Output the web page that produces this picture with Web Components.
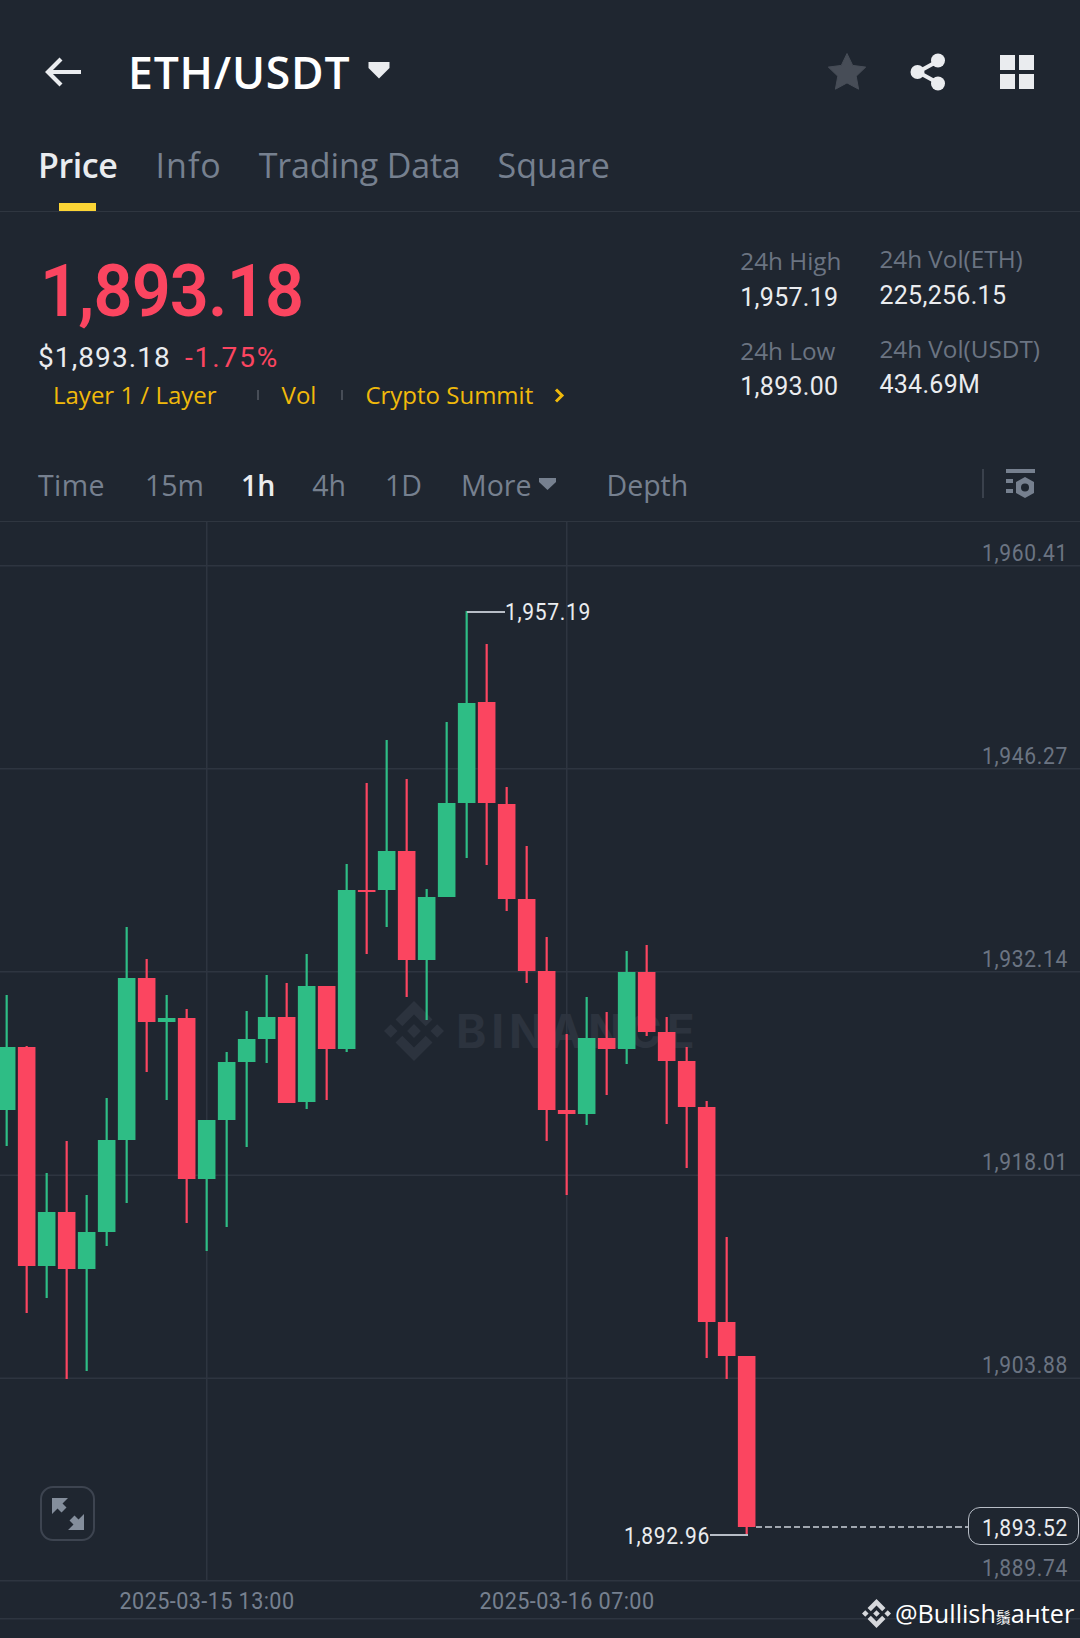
<!DOCTYPE html>
<html><head><meta charset="utf-8"><style>
html,body{margin:0;background:#1f2630}
body{width:1080px;height:1638px;overflow:hidden;font-family:"Open Sans","Noto Sans",sans-serif;color:#eaecef}
</style></head><body>
<market-app></market-app>
<script>
const NUM='Roboto,"Liberation Sans",sans-serif', TXT='"Open Sans","Noto Sans",sans-serif';
class TopBar extends HTMLElement{constructor(){super();this.attachShadow({mode:'open'}).innerHTML=`<style>
:host{display:flex;align-items:center;height:144px;padding-left:45px;box-sizing:border-box;padding-right:46px}
.t{font:600 44.500px/1 ${TXT};color:#fff;margin-left:46px;letter-spacing:.8px}
.c{margin-left:17px;margin-top:-4px}
.r{margin-left:auto;display:flex;align-items:center}
svg{display:block}
</style>
<svg width="37" height="30" viewBox="0 0 37 30"><path d="M36 15H5M16 2L3 15l13 13" fill="none" stroke="#eaecef" stroke-width="4.2"/></svg>
<span class="t">ETH/USDT</span>
<svg class="c" width="24" height="18" viewBox="0 0 24 18"><path d="M1.500 1h21v6L12 17.500 1.500 7z" fill="#eaecef"/></svg>
<div class="r">
<svg width="38" height="38" viewBox="0 0 38 38"><path d="M19 .5l5.700 11.900 13 1.700-9.500 9.100 2.400 13-11.600-6.300L7.400 36.200l2.400-13L.3 14.100l13-1.700z" fill="#474d57" stroke="#474d57" stroke-linejoin="round"/></svg>
<svg style="margin-left:44px" width="36" height="38" viewBox="0 0 36 38"><path d="M28 8L8 19l20 11" fill="none" stroke="#eaecef" stroke-width="4"/><circle cx="28" cy="7.500" r="7" fill="#eaecef"/><circle cx="7.500" cy="19" r="7" fill="#eaecef"/><circle cx="28" cy="30.500" r="7" fill="#eaecef"/></svg>
<svg style="margin-left:54px" width="34" height="34" viewBox="0 0 34 34"><path d="M0 0h15v15H0zM19 0h15v15H19zM0 19h15v15H0zM19 19h15v15H19z" fill="#eaecef"/></svg>
</div>`}}
class TabBar extends HTMLElement{constructor(){super();this.attachShadow({mode:'open'}).innerHTML=`<style>
:host{display:flex;height:68px;box-sizing:border-box;padding-left:38px;border-bottom:1px solid #2f3640;gap:38px;font:500 34px/1 ${TXT};color:#76808f}
span{position:relative;padding-top:4px}
.a{color:#eaecef;font-weight:600;letter-spacing:-.4px}
.a::after{content:"";position:absolute;left:21px;width:37px;height:8px;background:#fcd535;top:59px}
</style><span class="a">Price</span><span style="letter-spacing:1px">Info</span><span style="margin-left:-1px;letter-spacing:-.15px">Trading Data</span><span style="margin-left:-1px">Square</span>`}}
class PriceSummary extends HTMLElement{constructor(){super();this.attachShadow({mode:'open'}).innerHTML=`<style>
:host{display:flex;justify-content:space-between;height:230px;box-sizing:border-box;padding-left:38px}
.big{font:600 72px/1 ${NUM};color:#fb4560;letter-spacing:-.9px;margin:44px 0 0 2px;transform:scaleX(.95);transform-origin:0 0}
.sub{display:flex;gap:14px;font:400 28px/1 ${NUM};margin-top:16px;color:#eaecef}
.sub span{letter-spacing:1.100px}
.sub b{font-weight:400;color:#fb4560;letter-spacing:1.900px}
.tags{display:flex;align-items:center;font:400 24px/1 ${TXT};color:#f0b90b;margin-top:11px;margin-left:15px}
.tags i{display:block;width:2px;height:10px;background:#474d57}
.stats{display:flex;margin-right:40px;padding-top:37px;gap:38px}
.col{display:flex;flex-direction:column;gap:27px}
.col+.col{margin-top:-2px}
.l{font:400 24.300px/1 ${TXT};color:#6b7482;white-space:nowrap}
.v{font:400 25px/1 ${NUM};color:#eaecef;letter-spacing:.3px;margin-top:12px}
.low .l{margin-top:2px}
.low .v{margin-top:10px}
</style>
<div><div class="big">1,893.18</div>
<div class="sub"><span>$1,893.18</span><b>-1.75%</b></div>
<div class="tags"><span>Layer 1 / Layer</span><i style="margin:0 23px 0 40px"></i><span>Vol</span><i style="margin:0 22px 0 25px"></i><span>Crypto Summit</span>
<svg style="margin-left:21px" width="11" height="15" viewBox="0 0 11 15"><path d="M2 1.500l6 6-6 6" fill="none" stroke="#f0b90b" stroke-width="3"/></svg></div></div>
<div class="stats">
<div class="col"><div><div class="l">24h High</div><div class="v">1,957.19</div></div><div class="low"><div class="l">24h Low</div><div class="v">1,893.00</div></div></div>
<div class="col"><div><div class="l">24h Vol(ETH)</div><div class="v">225,256.15</div></div><div class="low"><div class="l">24h Vol(USDT)</div><div class="v">434.69M</div></div></div>
</div>`}}
class IntervalBar extends HTMLElement{constructor(){super();this.attachShadow({mode:'open'}).innerHTML=`<style>
:host{display:flex;align-items:center;height:80px;box-sizing:border-box;padding:8px 45px 0 38px;border-bottom:1px solid #2f3640;font:400 28.500px/1 ${TXT};color:#76808f}
.a{color:#eaecef;font-weight:600}
span{display:block}
.d{margin-left:auto;margin-top:-4px;width:2px;height:29px;background:#3a414c}
</style>
<span style="letter-spacing:.4px">Time</span><span style="margin-left:40px">15m</span><span class="a" style="margin-left:37px">1h</span><span style="margin-left:37px">4h</span><span style="margin-left:39px">1D</span><span style="margin-left:39px">More</span>
<svg style="margin:-4px 0 0 8px" width="17" height="12" viewBox="0 0 17 12"><path d="M0 0h17v4l-8.500 8L0 4z" fill="#76808f"/></svg>
<span style="margin-left:50px">Depth</span><i class="d"></i>
<svg style="margin:-4px 0 0 22px" width="29" height="29" viewBox="0 0 29 29"><path d="M0 0h29v4H0zM0 10h7v4H0zM0 20h7v4H0z" fill="#76808f"/><path d="M19 8l9 5v11l-9 5-9-5V13z" fill="#76808f"/><circle cx="19" cy="18.500" r="4" fill="#1f2630"/></svg>`}}
const C=[[995,1047,1110,1146,1],[1046,1047,1266,1313,0],[1173,1212,1266,1298,1],[1141,1212,1269,1379,0],[1195,1232,1269,1371,1],[1098,1140,1232,1246,1],[927,978,1140,1203,1],[959,978,1022,1072,0],[995,1018,1022,1100,1],[1009,1018,1179,1223,0],[1120,1120,1179,1251,1],[1052,1062,1120,1227,1],[1011,1039,1062,1147,1],[975,1017,1039,1063,1],[983,1017,1103,1103,0],[954,986,1102,1109,1],[986,986,1049,1100,0],[864,890,1049,1052,1],[783,890,892,954,0],[740,851,890,927,1],[779,851,960,997,0],[889,897,960,1020,1],[722,803,897,897,1],[611,703,803,858,1],[644,702,803,865,0],[787,804,899,911,0],[846,899,971,983,0],[937,971,1110,1141,0],[1034,1110,1114,1195,0],[997,1038,1114,1125,1],[1012,1038,1049,1095,0],[951,972,1049,1064,1],[945,972,1032,1036,0],[1017,1032,1061,1124,0],[1047,1061,1107,1168,0],[1101,1107,1322,1358,0],[1237,1322,1356,1379,0],[1356,1356,1527,1534,0]];
class CandleChart extends HTMLElement{constructor(){super();
const H=[565,768,971,1174.500,1377.500,1580,1618].map(y=>`<rect x="0" y="${y-522}" width="1080" height="1.500" fill="#2e3540"/>`).join('');
const V=[206,566].map(x=>`<rect x="${x}" y="0" width="1.500" height="1058" fill="#2e3540"/>`).join('');
const K=C.map((c,i)=>{const x=6.67+20*i,col=c[4]?'#2ebd85':'#fb4560',o=-522;
return `<rect x="${x-1.100}" y="${c[0]+o}" width="2.200" height="${c[3]-c[0]}" fill="${col}"/><rect x="${x-8.800}" y="${c[1]+o}" width="17.600" height="${c[2]-c[1]}" fill="${col}"/>`}).join('');
const labels=[['1,960.41',561],['1,946.27',764],['1,932.14',967],['1,918.01',1170],['1,903.88',1373],['1,889.74',1576]].map(([t,y])=>`<span class="y" style="top:${y-522-21}px">${t}</span>`).join('');
const logo=(s,c)=>`<svg width="${s}" height="${s}" viewBox="0 0 32 32"><path fill="${c}" d="M9.770 13.450L16 7.230l6.230 6.230 3.620-3.620L16 0 6.150 9.850zM0 16l3.620-3.620L7.240 16l-3.620 3.620zM9.770 18.550L16 24.770l6.230-6.230 3.630 3.620L16 32l-9.850-9.850zM24.760 16l3.620-3.620L32 16l-3.620 3.620zM19.670 16L16 12.320l-3.670 3.670L16 19.680z"/></svg>`;
this.attachShadow({mode:'open'}).innerHTML=`<style>
:host{display:block;position:relative;height:1116px;overflow:hidden}
svg{display:block}
.g{position:absolute;left:0;top:0}
.y,.n,.x{position:absolute;font:400 23.500px/26px ${NUM};letter-spacing:.75px;white-space:nowrap;transform-origin:0 50%}
.y,.n{transform:scaleX(.895)}
.y{left:982px;color:#6b7482}
.n{color:#eaecef}
.x{color:#76808f;top:1066px;letter-spacing:.45px;transform:translateX(-50%) scaleX(.92);transform-origin:50% 50%}
.wm{position:absolute;left:384px;top:479px;display:flex;align-items:center;gap:12px;font:700 46px/1 "Inter",${TXT};color:#2c333e;letter-spacing:4.800px}
.box{position:absolute;left:968px;top:985px;width:111px;height:38px;box-sizing:border-box;border:1.500px solid #b7bdc6;border-radius:12px}
.dash{position:absolute;left:756px;top:1004px;width:212px;height:1.500px;background:repeating-linear-gradient(90deg,#a0a6af 0 6px,transparent 6px 9.500px)}
.ln{position:absolute;background:#b7bdc6;height:1.500px}
.exp{position:absolute;left:40px;top:964px;width:55px;height:55px;box-sizing:border-box;border:2px solid #3d4450;border-radius:13px;display:flex;align-items:center;justify-content:center}
.cr{position:absolute;left:862px;top:1077px;display:flex;align-items:center;gap:4px;font:400 25.200px/1 ${TXT};color:#fff;white-space:nowrap}
</style>
<div class="wm">${logo(60,'#2c333e')}<span>BINANCE</span></div>
<svg class="g" width="1080" height="1116">${H}${V}${K}</svg>
${labels}
<span class="n" style="left:505px;top:77px">1,957.19</span><i class="ln" style="left:467px;top:89px;width:38px"></i>
<span class="n" style="left:624px;top:1001px">1,892.96</span><i class="ln" style="left:710px;top:1012px;width:38px"></i>
<i class="dash"></i><i class="box"></i><span class="n" style="left:982px;top:993px">1,893.52</span>
<div class="exp"><svg width="34" height="34" viewBox="0 0 34 34"><path d="M1 1h16l-5.500 5.500 4 4-5 5-4-4L1 17zM33 33H17l5.500-5.500-4-4 5-5 4 4L33 17z" fill="#848e9c"/></svg></div>
<span class="x" style="left:207px">2025-03-15 13:00</span><span class="x" style="left:567px">2025-03-16 07:00</span>
<div class="cr">${logo(29,'#d6d8dc')}<span>@Bullish<span style="font-size:15px;font-family:'Noto Sans CJK SC',sans-serif">鬚</span>анter</span></div>`}}
class MarketApp extends HTMLElement{constructor(){super();this.attachShadow({mode:'open'}).innerHTML=`<style>:host{display:block;width:1080px;height:1638px;overflow:hidden}</style><top-bar></top-bar><tab-bar></tab-bar><price-summary></price-summary><interval-bar></interval-bar><candle-chart></candle-chart>`}}
customElements.define('top-bar',TopBar);customElements.define('tab-bar',TabBar);customElements.define('price-summary',PriceSummary);customElements.define('interval-bar',IntervalBar);customElements.define('candle-chart',CandleChart);customElements.define('market-app',MarketApp);
</script></body></html>
